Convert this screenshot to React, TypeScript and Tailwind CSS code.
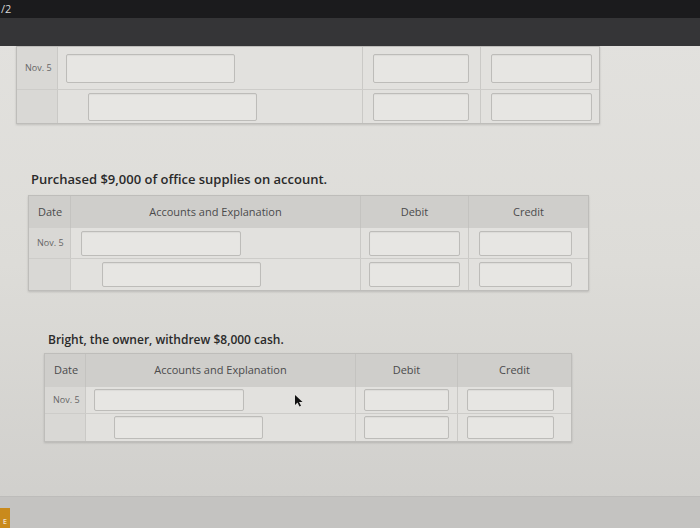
type Cfg = {
  wrap: string
  cols: [string, string, string, string]
  header?: string
  rows: [string, string]
  inputH: [string, string]
  acc: [string, string]
  deb: string
  cred: string
}

function Box({ cls }: { cls: string }) {
  return <div className={`rounded-[2px] border border-[#bdbcb9] bg-[#e7e6e3] shadow-[inset_0_1px_1px_rgba(0,0,0,0.05)] ${cls}`} />
}

function JournalTable({ c }: { c: Cfg }) {
  const [dw, aw, bw, cw] = c.cols
  return (
    <div className={`border border-[#bebdba] bg-[#e2e1de] shadow-[0_1px_2px_rgba(0,0,0,0.15)] ${c.wrap}`}>
      {c.header && (
        <div className={`flex bg-[#cfcecb] text-[11px] text-[#4b4b4b] ${c.header}`}>
          <div className={`flex items-center pl-[9px] border-r border-[#c4c3c0] ${dw}`}>Date</div>
          <div className={`flex items-center justify-center border-r border-[#c4c3c0] ${aw}`}>Accounts and Explanation</div>
          <div className={`flex items-center justify-center border-r border-[#c4c3c0] ${bw}`}>Debit</div>
          <div className={`flex items-center justify-center ${cw}`}>Credit</div>
        </div>
      )}
      {[0, 1].map(r => (
        <div key={r} className={`flex ${r === 0 ? '' : 'border-t border-[#cdccc9]'} ${c.rows[r]}`}>
          <div className={`flex items-center pl-[8px] bg-[#d9d8d5] border-r border-[#cac9c6] text-[9px] text-[#666] ${dw}`}>
            {r === 0 ? 'Nov. 5' : ''}
          </div>
          <div className={`flex items-center border-r border-[#cac9c6] ${aw}`}>
            <Box cls={`${c.acc[r]} ${c.inputH[r]}`} />
          </div>
          <div className={`flex items-center border-r border-[#cac9c6] ${bw}`}>
            <Box cls={`${c.deb} ${c.inputH[r]}`} />
          </div>
          <div className={`flex items-center ${cw}`}>
            <Box cls={`${c.cred} ${c.inputH[r]}`} />
          </div>
        </div>
      ))}
    </div>
  )
}

const T1: Cfg = {
  wrap: 'ml-[16px] w-[584px]',
  cols: ['w-[41px]', 'w-[305px]', 'w-[118px]', 'w-[118px]'],
  rows: ['h-[42px]', 'h-[34px]'],
  inputH: ['h-[29px]', 'h-[28px]'],
  acc: ['ml-[8px] w-[169px]', 'ml-[30px] w-[169px]'],
  deb: 'ml-[10px] w-[96px]',
  cred: 'ml-[10px] w-[101px]',
}
const T2: Cfg = {
  wrap: 'ml-[28px] w-[561px] mt-[7px]',
  cols: ['w-[42px]', 'w-[290px]', 'w-[108px]', 'w-[119px]'],
  header: 'h-[32px]',
  rows: ['h-[30px]', 'h-[32px]'],
  inputH: ['h-[25px]', 'h-[25px]'],
  acc: ['ml-[10px] w-[160px]', 'ml-[31px] w-[159px]'],
  deb: 'ml-[8px] w-[91px]',
  cred: 'ml-[10px] w-[93px]',
}
const T3: Cfg = {
  wrap: 'ml-[44px] w-[528px] mt-[4px]',
  cols: ['w-[41px]', 'w-[270px]', 'w-[102px]', 'w-[113px]'],
  header: 'h-[33px]',
  rows: ['h-[26px]', 'h-[28px]'],
  inputH: ['h-[22px]', 'h-[23px]'],
  acc: ['ml-[8px] w-[150px]', 'ml-[28px] w-[149px]'],
  deb: 'ml-[8px] w-[85px]',
  cred: 'ml-[9px] w-[87px]',
}

export default function App() {
  return (
    <div className="relative w-[700px] h-[528px] overflow-hidden bg-gradient-to-b from-[#e3e2df] via-[#dddcd8] to-[#cfcecb] font-['Open_Sans','Noto_Sans',sans-serif]">
      <div className="h-[18px] bg-[#1b1b1d] text-[11px] leading-[18px] text-[#d8d8d8] pl-[1px]">/2</div>
      <div className="h-[28px] bg-[#353537]" />

      <JournalTable c={T1} />

      <p className="mt-[46px] ml-[31px] h-[18px] text-[13px] leading-[18px] font-semibold text-[#2a2a2a]">
        Purchased $9,000 of office supplies on account.
      </p>
      <JournalTable c={T2} />

      <p className="mt-[40px] ml-[48px] h-[18px] text-[12px] leading-[18px] font-semibold text-[#2a2a2a]">
        Bright, the owner, withdrew $8,000 cash.
      </p>
      <JournalTable c={T3} />

      {/* cursor */}
      <svg className="absolute left-[294px] top-[394px]" width="9" height="13" viewBox="0 0 9 13">
        <path d="M1 1 L1 11 L3.5 8.5 L5.5 12.5 L7 11.8 L5 8 L8.5 8 Z" fill="#111" />
      </svg>

      <div className="absolute left-0 right-0 bottom-0 h-[32px] bg-[#c4c3c1] border-t border-[#bdbcba]" />
      <div className="absolute left-0 bottom-0 w-[10px] h-[20px] bg-[#c98a1c] text-[7px] leading-none text-white flex items-end justify-center pb-[3px]">E</div>
    </div>
  )
}
